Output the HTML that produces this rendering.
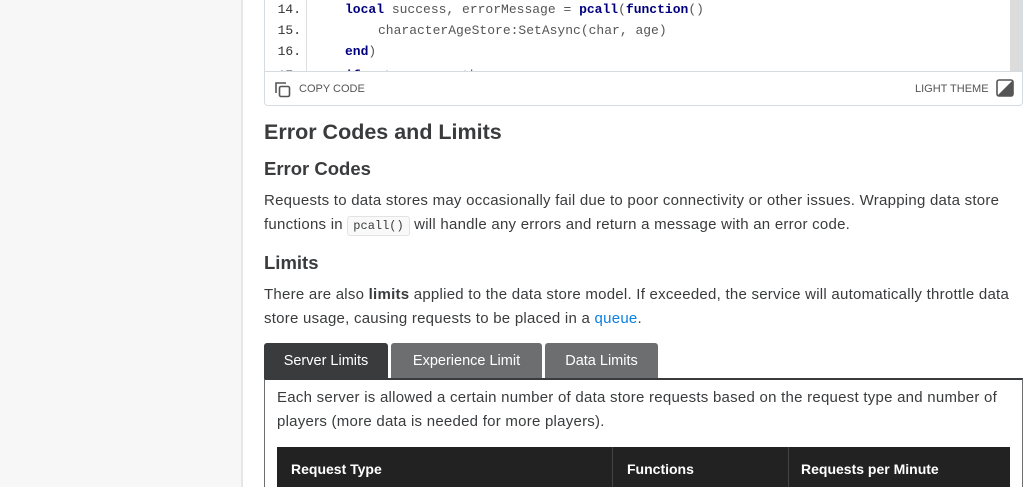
<!DOCTYPE html>
<html><head><style>
html,body{margin:0;width:1035px;height:487px;overflow:hidden}
body{background:#fff;font-family:"Liberation Sans",sans-serif;color:#393b3d;position:relative}
.side{position:absolute;left:0;top:0;width:241px;height:487px;background:#f7f7f7;border-right:2px solid #e6e6e6}
.a{position:absolute;white-space:nowrap}
.code{position:absolute;left:264px;top:-2px;width:757px;height:106px;border:1px solid #d6dbe0;border-radius:0 0 4px 4px;overflow:hidden}
.cl{position:absolute;font-family:"Liberation Mono",monospace;font-size:13px;color:#555}
.num{color:#333;left:4px;width:32px;text-align:right}
.kw{color:#00007f;font-weight:bold}
p{margin:0}
.tx{font-size:15px;line-height:25px;color:#393b3d;letter-spacing:0.25px}
</style></head><body>
<div class="side"></div>
<div class="code">
 <div style="position:absolute;left:41px;top:0;width:1px;height:72px;background:#ddd"></div>
 <div style="position:absolute;right:0;top:0;width:12px;height:72px;background:#dcdcdc"></div>
 <div class="cl num" style="top:3px">14.</div><div class="cl" style="left:80px;top:3px"><span class="kw">local</span> success, errorMessage = <span class="kw">pcall</span>(<span class="kw">function</span>()</div>
 <div class="cl num" style="top:24px">15.</div><div class="cl" style="left:113px;top:24px">characterAgeStore:SetAsync(char, age)</div>
 <div class="cl num" style="top:45px">16.</div><div class="cl" style="left:80px;top:45px"><span class="kw">end</span>)</div>
 <div class="cl num" style="top:69px">17.</div><div class="cl" style="left:80px;top:69px"><span class="kw">if</span> not success then</div>
 <div style="position:absolute;left:0;right:0;top:72px;height:40px;background:#fff;border-top:1px solid #d6dbe0"></div>
 <svg style="position:absolute;left:9px;top:82px" width="18" height="18" viewBox="0 0 18 18"><path d="M2 12V2h10" fill="none" stroke="#555" stroke-width="1.6"/><rect x="5.5" y="5.5" width="10" height="10" rx="1.5" fill="none" stroke="#555" stroke-width="1.6"/></svg>
 <div class="a" style="left:34px;top:84px;font-size:11px;color:#555">COPY CODE</div>
 <div class="a" style="left:650px;top:84px;font-size:11px;color:#555">LIGHT THEME</div>
 <svg style="position:absolute;left:731px;top:80px" width="18" height="18" viewBox="0 0 18 18"><rect x="1" y="1" width="16" height="16" rx="2" fill="#fff" stroke="#555" stroke-width="1.6"/><path d="M17 1V17H1Z" fill="#555"/></svg>
</div>
<div class="a" style="left:264px;top:120px;font-size:21.5px;font-weight:bold;color:#393b3d">Error Codes and Limits</div>
<div class="a" style="left:264px;top:158px;font-size:18.5px;font-weight:bold">Error Codes</div>
<div class="a tx" style="left:264px;top:188px">Requests to data stores may occasionally fail due to poor connectivity or other issues. Wrapping data store</div>
<div class="a tx" style="left:264px;top:212px">functions in <span style="font-family:'Liberation Mono',monospace;font-size:12px;letter-spacing:0;border:1px solid #e3e3e3;background:#f9f9f9;padding:2px 5px;border-radius:3px">pcall()</span> will handle any errors and return a message with an error code.</div>
<div class="a" style="left:264px;top:252px;font-size:18.5px;font-weight:bold">Limits</div>
<div class="a tx" style="left:264px;top:282px">There are also <b>limits</b> applied to the data store model. If exceeded, the service will automatically throttle data</div>
<div class="a tx" style="left:264px;top:306px">store usage, causing requests to be placed in a <span style="color:#0a80e3">queue</span>.</div>
<div class="a" style="left:264px;top:343px;width:124px;height:36px;background:#393b3d;border-radius:3px 3px 0 0;color:#fff;font-size:14.5px;line-height:36px;text-align:center">Server Limits</div>
<div class="a" style="left:391px;top:343px;width:151px;height:36px;background:#6c6e70;border-radius:3px 3px 0 0;color:#fff;font-size:14.5px;line-height:36px;text-align:center">Experience Limit</div>
<div class="a" style="left:545px;top:343px;width:113px;height:36px;background:#6c6e70;border-radius:3px 3px 0 0;color:#fff;font-size:14.5px;line-height:36px;text-align:center">Data Limits</div>
<div class="a" style="left:264px;top:378px;width:757px;height:120px;border:1px solid #6c6e70;border-top:2px solid #393b3d"></div>
<div class="a tx" style="left:277px;top:385px">Each server is allowed a certain number of data store requests based on the request type and number of</div>
<div class="a tx" style="left:277px;top:409px">players (more data is needed for more players).</div>
<div class="a" style="left:277px;top:447px;width:733px;height:45px;background:#222;color:#fff;font-size:14px;font-weight:bold">
 <span class="a" style="left:14px;top:14px">Request Type</span>
 <div class="a" style="left:335px;top:0;width:1px;height:45px;background:#444"></div>
 <span class="a" style="left:350px;top:14px">Functions</span>
 <div class="a" style="left:511px;top:0;width:1px;height:45px;background:#444"></div>
 <span class="a" style="left:524px;top:14px">Requests per Minute</span>
</div>
</body></html>
